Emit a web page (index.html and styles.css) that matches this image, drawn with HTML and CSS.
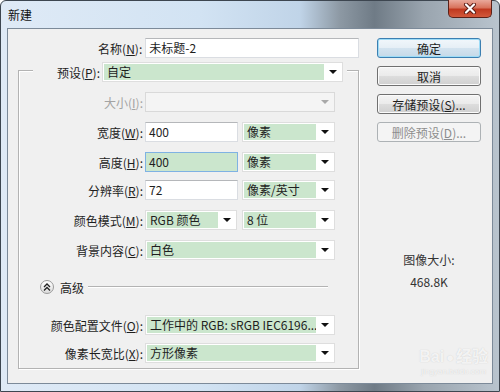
FILE: index.html
```html
<!DOCTYPE html>
<html lang="zh-CN">
<head>
    <meta charset="UTF-8">
    <title>新建</title>
    <link rel="stylesheet" href="styles.css">
</head>
<body>
    <div class="window">
        <div class="titlebar">
            <span class="title">新建</span>
            <div class="close">
                <svg width="14" height="11" viewBox="0 0 14 11">
                    <path d="M3 1.5 L11 9.5 M11 1.5 L3 9.5" stroke="#5a1a12" stroke-width="4" stroke-linecap="round"/>
                    <path d="M3 1.5 L11 9.5 M11 1.5 L3 9.5" stroke="#fff" stroke-width="2.2" stroke-linecap="round"/>
                </svg>
            </div>
        </div>

        <div class="client">
            <div class="form">
                <div class="row name-row">
                    <label class="lbl">名称(<u>N</u>):</label>
                    <div class="input w215">未标题-2</div>
                </div>

                <div class="group">
                    <div class="legend">
                        <label class="lbl lbl-preset">预设(<u>P</u>):</label>
                        <div class="select w241"><span class="val">自定</span><span class="drop"><i class="arrow"></i></span></div>
                    </div>

                    <div class="row">
                        <label class="lbl disabled">大小(<u>I</u>):</label>
                        <div class="select w190 off"><span class="val"></span><span class="drop"><i class="arrow"></i></span></div>
                    </div>
                    <div class="row">
                        <label class="lbl">宽度(<u>W</u>):</label>
                        <div class="input w93">400</div>
                        <div class="select w93 gap"><span class="val">像素</span><span class="drop"><i class="arrow"></i></span></div>
                    </div>
                    <div class="row">
                        <label class="lbl">高度(<u>H</u>):</label>
                        <div class="input w93 focus">400</div>
                        <div class="select w93 gap"><span class="val">像素</span><span class="drop"><i class="arrow"></i></span></div>
                    </div>
                    <div class="row tight">
                        <label class="lbl">分辨率(<u>R</u>):</label>
                        <div class="input w93">72</div>
                        <div class="select w93 gap"><span class="val">像素/英寸</span><span class="drop"><i class="arrow"></i></span></div>
                    </div>
                    <div class="row">
                        <label class="lbl">颜色模式(<u>M</u>):</label>
                        <div class="select w92"><span class="val">RGB 颜色</span><span class="drop"><i class="arrow"></i></span></div>
                        <div class="select w93 gap5"><span class="val">8 位</span><span class="drop"><i class="arrow"></i></span></div>
                    </div>
                    <div class="row">
                        <label class="lbl">背景内容(<u>C</u>):</label>
                        <div class="select w190"><span class="val">白色</span><span class="drop"><i class="arrow"></i></span></div>
                    </div>

                    <div class="advanced">
                        <span class="toggle">
                            <svg width="8" height="8" viewBox="0 0 8 8">
                                <path d="M1 4 L4 1 L7 4 M1 7.5 L4 4.5 L7 7.5" fill="none" stroke="#222" stroke-width="1.3"/>
                            </svg>
                        </span>
                        <span class="adv-text">高级</span>
                        <span class="adv-line"></span>
                    </div>

                    <div class="row profile-row">
                        <label class="lbl">颜色配置文件(<u>O</u>):</label>
                        <div class="select w190"><span class="val">工作中的 RGB: sRGB IEC6196...</span><span class="drop"><i class="arrow"></i></span></div>
                    </div>
                    <div class="row tight">
                        <label class="lbl">像素长宽比(<u>X</u>):</label>
                        <div class="select w190"><span class="val">方形像素</span><span class="drop"><i class="arrow"></i></span></div>
                    </div>
                </div>
            </div>

            <div class="side">
                <button class="btn default">确定</button>
                <button class="btn">取消</button>
                <button class="btn">存储预设(<u>S</u>)...</button>
                <button class="btn" disabled>删除预设(<u>D</u>)...</button>

                <div class="size-info">
                    <div>图像大小:</div>
                    <div class="size-value">468.8K</div>
                </div>
            </div>

            <div class="watermark">
                <div>Bai<span class="paw">●</span>经验</div>
                <div class="wm-url">jingyan.baidu.com</div>
            </div>
        </div>
    </div>
</body>
</html>
```

FILE: styles.css
```css
body {
    margin: 0;
    font-family: "Noto Sans CJK SC", "Liberation Sans", sans-serif;
    font-size: 12px;
    color: #1e1e1e;
    background: #fff;
}
.window {
    width: 500px;
    height: 392px;
    display: flex;
    flex-direction: column;
    box-sizing: border-box;
    background: linear-gradient(to right, #dfeaf6 0%, #d2e3f3 40%, #c0d4e8 60%, #8d99a4 68%, #6f7b86 75%, #9aa5af 85%, #b9c4ce 100%);
    border: 1px solid #3d4650;
    border-radius: 6px 6px 0 0;
    position: relative;
}
.titlebar {
    height: 27px;
    display: flex;
    justify-content: space-between;
    align-items: flex-start;
}
.title {
    margin: 6px 0 0 7px;
    line-height: 16px;
    color: #111;
}
.close {
    width: 44px;
    height: 18px;
    margin-right: 7px;
    margin-top: -1px;
    display: flex;
    align-items: center;
    justify-content: center;
    box-sizing: border-box;
    border: 1px solid #5b2118;
    border-top: 0;
    border-radius: 0 0 5px 5px;
    background: linear-gradient(to bottom, #e9a99b 0%, #d8735c 45%, #c0391f 55%, #d2583b 100%);
}
.client {
    flex: 1;
    margin: 0 6px 7px 6px;
    background: #f0f0f0;
    border: 1px solid #7c8a99;
    display: flex;
    position: relative;
}
.form {
    width: 351px;
    padding-left: 10px;
    box-sizing: border-box;
}
.row {
    display: flex;
    align-items: center;
    height: 20px;
    margin-top: 10px;
}
.row.tight {
    margin-top: 8px;
}
.lbl {
    width: 124px;
    text-align: right;
    margin-right: 2px;
    white-space: nowrap;
}
.lbl.disabled {
    color: #a3a3a3;
}
.name-row {
    margin-top: 9px;
}
.name-row .lbl {
    width: 125px;
    margin-right: 3px;
}
.group {
    margin-top: 12px;
    width: 341px;
    box-sizing: border-box;
    border: 1px solid #b3b3b3;
    box-shadow: 1px 1px 0 #fff, inset 1px 1px 0 #fff;
    padding-bottom: 5px;
}
.legend {
    display: flex;
    align-items: center;
    height: 20px;
    margin: -9px 0 0 14px;
    width: 314px;
    background: #f0f0f0;
}
.lbl-preset {
    width: 67px;
}
.input {
    height: 20px;
    box-sizing: border-box;
    border: 1px solid #dadde2;
    border-top-color: #b5b7ba;
    background: #fff;
    padding-left: 3px;
    line-height: 18px;
}
.input.focus {
    border-color: #7fb2e3;
    background: #cbe6cd;
}
.select {
    height: 20px;
    box-sizing: border-box;
    border: 1px solid #dedede;
    background: #fff;
    display: flex;
    padding: 1px;
}
.select .val {
    flex: 1;
    background: #cbe6cd;
    padding-left: 3px;
    line-height: 16px;
    white-space: nowrap;
    overflow: hidden;
}
.select .drop {
    width: 17px;
    display: flex;
    align-items: center;
    justify-content: center;
}
.arrow {
    width: 0;
    height: 0;
    border-left: 4px solid transparent;
    border-right: 4px solid transparent;
    border-top: 4px solid #111;
}
.select.off {
    background: #f4f4f4;
    border-color: #d9d9d9;
}
.select.off .val {
    background: #f4f4f4;
}
.select.off .arrow {
    border-top-color: #a8a8a8;
}
.w215 { width: 215px; }
.w241 { width: 241px; }
.w190 { width: 190px; }
.w93 { width: 93px; }
.w92 { width: 92px; }
.gap { margin-left: 4px; }
.gap5 { margin-left: 5px; }
.advanced {
    display: flex;
    align-items: center;
    height: 14px;
    margin: 20px 0 0 21px;
}
.toggle {
    width: 12px;
    height: 12px;
    border-radius: 50%;
    border: 1px solid #9a9a9a;
    background: linear-gradient(#ffffff, #dcdcdc);
    display: flex;
    align-items: center;
    justify-content: center;
}
.adv-text {
    margin-left: 6px;
}
.adv-line {
    width: 240px;
    margin-left: 4px;
    border-top: 1px solid #b3b3b3;
    border-bottom: 1px solid #fff;
}
.profile-row {
    margin-top: 21px;
}
.side {
    display: flex;
    flex-direction: column;
    margin-left: 18px;
    padding-top: 9px;
    width: 104px;
}
.btn {
    width: 104px;
    height: 20px;
    margin-bottom: 8px;
    padding: 0;
    font-family: inherit;
    font-size: 12px;
    color: #1e1e1e;
    border: 1px solid #707070;
    border-radius: 3px;
    background: linear-gradient(to bottom, #f4f4f4 0%, #ebebeb 48%, #dddddd 52%, #d0d0d0 100%);
    box-shadow: inset 0 0 0 1px #fbfbfb;
}
.btn.default {
    border-color: #3c7fb1;
    box-shadow: inset 0 0 0 1px #9ddcf7;
    background: linear-gradient(to bottom, #f1f7fb 0%, #e6eff6 48%, #d3e3ef 52%, #c5d9e8 100%);
}
.btn:disabled {
    color: #8d8d8d;
    border-color: #adb2b5;
    background: #f4f4f4;
    box-shadow: none;
}
.size-info {
    margin-top: 102px;
    text-align: center;
    line-height: 16px;
    color: #333;
}
.size-value {
    margin-top: 6px;
}
.watermark {
    position: absolute;
    right: 4px;
    bottom: 6px;
    text-align: center;
    font-family: "Liberation Sans", "Noto Sans CJK SC", sans-serif;
    font-size: 16px;
    font-weight: bold;
    line-height: 18px;
    color: rgba(255, 255, 255, 0.8);
    text-shadow: 0 0 1px rgba(170, 170, 170, 0.6);
}
.paw {
    font-size: 13px;
    margin: 0 2px;
}
.wm-url {
    font-size: 8px;
    font-weight: normal;
    line-height: 10px;
}
```
